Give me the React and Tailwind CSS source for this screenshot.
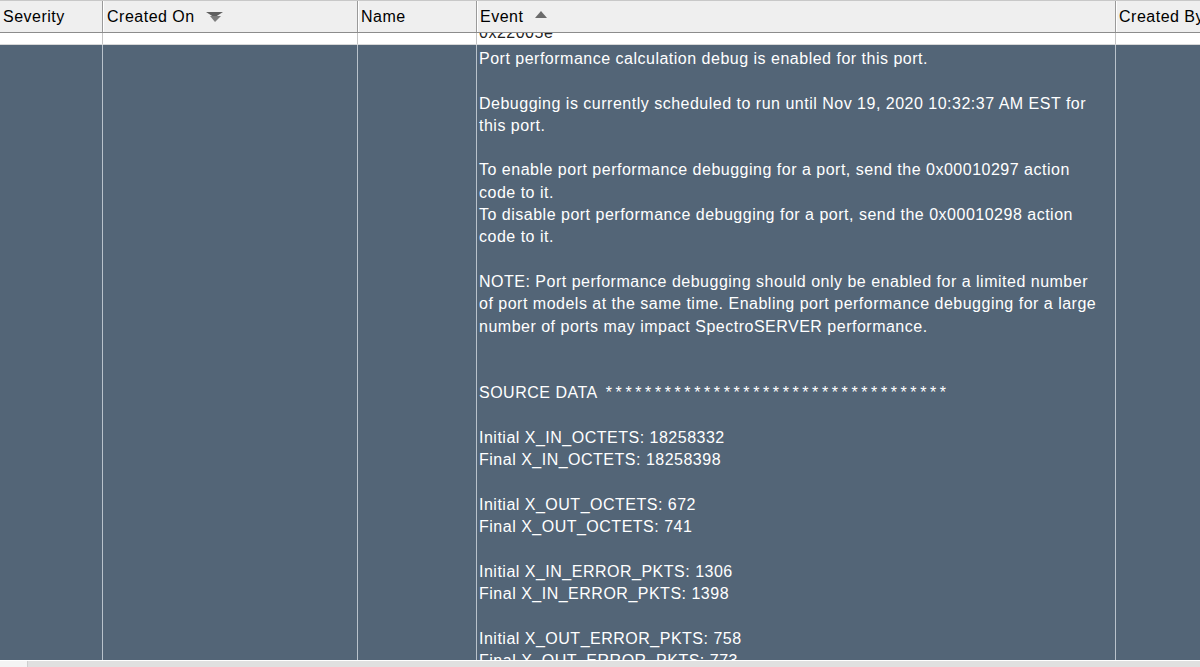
const cols = "grid grid-cols-[103px_255px_119px_639px_1fr]";

const eventLines = [
  "Port performance calculation debug is enabled for this port.",
  "",
  "Debugging is currently scheduled to run until Nov 19, 2020 10:32:37 AM EST for",
  "this port.",
  "",
  "To enable port performance debugging for a port, send the 0x00010297 action",
  "code to it.",
  "To disable port performance debugging for a port, send the 0x00010298 action",
  "code to it.",
  "",
  "NOTE: Port performance debugging should only be enabled for a limited number",
  "of port models at the same time. Enabling port performance debugging for a large",
  "number of ports may impact SpectroSERVER performance.",
  "",
  "",
  "SOURCE DATA",
  "",
  "Initial X_IN_OCTETS: 18258332",
  "Final X_IN_OCTETS: 18258398",
  "",
  "Initial X_OUT_OCTETS: 672",
  "Final X_OUT_OCTETS: 741",
  "",
  "Initial X_IN_ERROR_PKTS: 1306",
  "Final X_IN_ERROR_PKTS: 1398",
  "",
  "Initial X_OUT_ERROR_PKTS: 758",
  "Final X_OUT_ERROR_PKTS: 773",
];

function SortDown() {
  return (
    <svg width="19" height="12" viewBox="0 0 19 12" className="ml-[10px]">
      <path d="M1 1 H18 L9.5 6.5 Z" fill="#5f5f5f" />
      <path d="M5 5 H16 L10 11 Z" fill="#7d7d7d" />
    </svg>
  );
}

function SortUp() {
  return (
    <svg width="14" height="9" viewBox="0 0 14 9" className="ml-[11px] mb-[4px]">
      <path d="M7 1 L13 8 H1 Z" fill="#6b6b6b" />
    </svg>
  );
}

function HeaderCell({ children, last }) {
  return (
    <div
      className={
        "flex items-center h-full pl-[3px] overflow-hidden whitespace-nowrap " +
        (last ? "" : "border-r border-r-[#9a9a9a] shadow-[1px_0_0_#ffffff]")
      }
    >
      {children}
    </div>
  );
}

export default function App() {
  return (
    <div
      className="h-[667px] w-[1200px] flex flex-col overflow-hidden bg-white tracking-[0.5px]"
      style={{ fontFamily: '"Liberation Sans", Arial, sans-serif' }}
    >
      {/* header */}
      <div className={cols + " h-[33px] bg-[#efefef] border-t border-t-[#c8c8c8] border-b border-b-[#8c8c8c] text-[16px] text-black"}>
        <HeaderCell>Severity</HeaderCell>
        <HeaderCell>
          <span className="pl-[1px]">Created On</span>
          <SortDown />
        </HeaderCell>
        <HeaderCell>Name</HeaderCell>
        <HeaderCell>
          <span>Event</span>
          <SortUp />
        </HeaderCell>
        <HeaderCell last>Created By</HeaderCell>
      </div>

      {/* partially scrolled white row */}
      <div className={cols + " h-[12px] bg-white border-b border-b-[#d8d8d8] text-[16px] text-[#222]"}>
        <div className="border-r border-r-[#c4c4c4]" />
        <div className="border-r border-r-[#c4c4c4]" />
        <div className="border-r border-r-[#c4c4c4]" />
        <div className="border-r border-r-[#c4c4c4] overflow-hidden pl-[2px]">
          <div className="leading-[22.3px] -mt-[11px]">0x22005e</div>
        </div>
        <div />
      </div>

      {/* selected row */}
      <div className={cols + " flex-1 bg-[#536577] text-[16px] text-white overflow-hidden"}>
        <div className="border-r border-r-[#b9c2cb]" />
        <div className="border-r border-r-[#b9c2cb]" />
        <div className="border-r border-r-[#b9c2cb]" />
        <div className="border-r border-r-[#b9c2cb] pl-[2px] pt-[3px]">
          {eventLines.map((line, i) => (
            <div key={i} className="h-[22.3px] leading-[22.3px] whitespace-nowrap">
              {line}
              {line === "SOURCE DATA" && (
                <span className="tracking-[3.6px]"> ***********************************</span>
              )}
            </div>
          ))}
        </div>
        <div />
      </div>

      {/* horizontal scrollbar */}
      <div className="h-[7px] border-t border-t-white bg-[#e2e2e2] flex">
        <div className="w-[27px] bg-[#f4f4f4]" />
        <div className="flex-1 bg-[#e0e0e0] border-l border-l-[#cfcfcf]" />
      </div>
    </div>
  );
}
